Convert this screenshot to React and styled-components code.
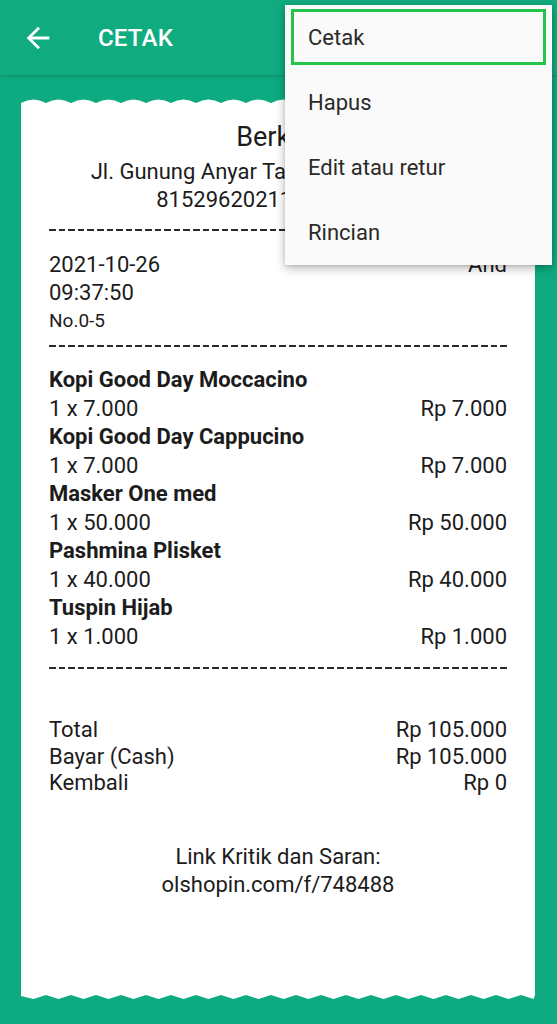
import React from "react";
import styled, { createGlobalStyle } from "styled-components";

const Global = createGlobalStyle`
  html, body { margin: 0; padding: 0; }
  body {
    background: #0dab7f;
    font-family: Roboto, "Noto Sans", Arial, sans-serif;
    width: 557px;
    height: 1024px;
    overflow: hidden;
  }
`;

const Screen = styled.div`
  position: relative;
  width: 557px;
  height: 1024px;
  background: #0dab7f;
  display: flex;
  flex-direction: column;
`;

const AppBar = styled.header`
  height: 75px;
  flex: none;
  background: #10ac80;
  box-shadow: 0 1px 3px rgba(0, 0, 0, 0.18);
  display: flex;
  align-items: center;
  padding-left: 20px;
  gap: 42px;
  color: #fff;
  position: relative;
  z-index: 1;
`;

const BackButton = styled.span`
  display: flex;
  width: 36px;
  height: 36px;
  align-items: center;
  justify-content: center;
`;

const Title = styled.h1`
  margin: 0;
  font-size: 24px;
  font-weight: 500;
  letter-spacing: 0.2px;
  line-height: 1;
`;

const Card = styled.div`
  margin: 22px 22px 0 21px;
  display: flex;
  flex-direction: column;
`;

const Edge = styled.svg`
  display: block;
  flex: none;
`;

const Paper = styled.div`
  background: #fff;
  padding: 15px 28px 95px;
  color: #1c1c1c;
  font-size: 22px;
`;

const Center = styled.div`
  text-align: center;
  font-size: ${(p) => p.$size || 22}px;
  line-height: ${(p) => p.$lh || 28}px;
  margin-top: ${(p) => p.$mt || 0}px;
  white-space: nowrap;
`;

const Dashes = styled.div`
  height: 2px;
  margin-top: ${(p) => p.$mt}px;
  background: repeating-linear-gradient(
    to right,
    #2a2a2a 0,
    #2a2a2a 6.6px,
    transparent 6.6px,
    transparent 9.6px
  );
`;

const InfoRow = styled.div`
  margin-top: 20px;
  display: flex;
  justify-content: space-between;
  line-height: 28px;
`;

const Col = styled.div`
  display: flex;
  flex-direction: column;
`;

const Small = styled.span`
  font-size: 19px;
`;

const Items = styled.div`
  margin-top: 19px;
  line-height: 28.5px;
`;

const ItemName = styled.div`
  font-weight: 700;
`;

const Row = styled.div`
  display: flex;
  justify-content: space-between;
`;

const Totals = styled.div`
  margin-top: 48px;
  line-height: 26.5px;
`;

const Menu = styled.ul`
  position: absolute;
  top: 5px;
  left: 285px;
  width: 267px;
  margin: 0;
  padding: 0;
  list-style: none;
  background: #fafafa;
  box-shadow: 0 3px 10px rgba(0, 0, 0, 0.28), 0 1px 3px rgba(0, 0, 0, 0.12);
  z-index: 2;
`;

const MenuItem = styled.li`
  height: ${(p) => (p.$focused ? 56 : 65)}px;
  margin: ${(p) => (p.$focused ? "4px 6px 5px 6px" : "0")};
  padding-left: ${(p) => (p.$focused ? 17 : 23)}px;
  box-shadow: ${(p) => (p.$focused ? "inset 0 0 0 3px #25c34c" : "none")};
  display: flex;
  align-items: center;
  font-size: 22px;
  color: #2a2a2a;
`;

function edgePath(width, top) {
  const period = 25;
  const h = 6;
  let d = "";
  if (top) {
    d = `M0 ${h + 1}`;
    for (let x = 0; x < width; x += period) {
      const x2 = Math.min(x + period, width);
      d += ` L${x} ${h} Q${x + period / 2} ${-1} ${x2} ${h}`;
    }
    d += ` L${width} ${h + 1} Z`;
  } else {
    d = `M0 0 L0 2`;
    for (let x = 0; x < width; x += period) {
      d += ` L${x + period / 2} ${h - 1} L${Math.min(x + period, width)} 1`;
    }
    d += ` L${width} 0 Z`;
  }
  return d;
}

const items = [
  { name: "Kopi Good Day Moccacino", qty: "1 x 7.000", total: "Rp 7.000" },
  { name: "Kopi Good Day Cappucino", qty: "1 x 7.000", total: "Rp 7.000" },
  { name: "Masker One med", qty: "1 x 50.000", total: "Rp 50.000" },
  { name: "Pashmina Plisket", qty: "1 x 40.000", total: "Rp 40.000" },
  { name: "Tuspin Hijab", qty: "1 x 1.000", total: "Rp 1.000" },
];

const totals = [
  ["Total", "Rp 105.000"],
  ["Bayar (Cash)", "Rp 105.000"],
  ["Kembali", "Rp 0"],
];

const menu = ["Cetak", "Hapus", "Edit atau retur", "Rincian"];

export default function App() {
  const W = 514;
  return (
    <Screen>
      <Global />
      <AppBar>
        <BackButton>
          <svg width="34" height="34" viewBox="0 0 24 24" fill="#fff">
            <path d="M20 11H7.83l5.59-5.59L12 4l-8 8 8 8 1.41-1.41L7.83 13H20v-2z" />
          </svg>
        </BackButton>
        <Title>CETAK</Title>
      </AppBar>

      <Card>
        <Edge width={W} height="7" viewBox={`0 0 ${W} 7`}>
          <path d={edgePath(W, true)} fill="#fff" />
        </Edge>
        <Paper>
          <Center $size={27} $lh={36}>Berkah</Center>
          <Center $mt={3}>Jl. Gunung Anyar Tambak III No. 125 B</Center>
          <Center>81529620211 - Surabaya</Center>
          <Dashes $mt={15} />
          <InfoRow>
            <Col>
              <span>2021-10-26</span>
              <span>09:37:50</span>
              <Small>No.0-5</Small>
            </Col>
            <span>And</span>
          </InfoRow>
          <Dashes $mt={10} />
          <Items>
            {items.map((it) => (
              <React.Fragment key={it.name}>
                <ItemName>{it.name}</ItemName>
                <Row>
                  <span>{it.qty}</span>
                  <span>{it.total}</span>
                </Row>
              </React.Fragment>
            ))}
          </Items>
          <Dashes $mt={16} />
          <Totals>
            {totals.map(([k, v]) => (
              <Row key={k}>
                <span>{k}</span>
                <span>{v}</span>
              </Row>
            ))}
          </Totals>
          <Center $mt={46}>Link Kritik dan Saran:</Center>
          <Center>olshopin.com/f/748488</Center>
        </Paper>
        <Edge width={W} height="7" viewBox={`0 0 ${W} 7`}>
          <path d={edgePath(W, false)} fill="#fff" />
        </Edge>
      </Card>

      <Menu>
        {menu.map((m, i) => (
          <MenuItem key={m} $focused={i === 0}>
            {m}
          </MenuItem>
        ))}
      </Menu>
    </Screen>
  );
}
